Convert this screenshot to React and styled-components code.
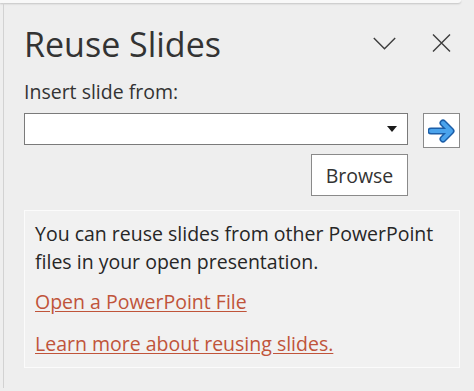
import React from "react";
import styled, { createGlobalStyle } from "styled-components";

const GlobalStyle = createGlobalStyle`
  html, body {
    margin: 0;
    padding: 0;
    background: #eeeeee;
  }
  body {
    font-family: "Open Sans", "Noto Sans", sans-serif;
    color: #262626;
  }
`;

function ReuseSlides() {
  return (
    <>
      <GlobalStyle />
      <Page>
        <TopStrip />
        <Panel>
          <Header>
            <Title>Reuse Slides</Title>
            <HeaderIcons>
              <IconButton aria-label="Collapse">
                <svg width="23" height="13" viewBox="0 0 23 13">
                  <path d="M0.8 1 L11.5 11.8 L22.2 1" fill="none" stroke="#3c3c3c" strokeWidth="1.4" />
                </svg>
              </IconButton>
              <IconButton aria-label="Close">
                <svg width="19" height="18" viewBox="0 0 19 18">
                  <path d="M1 0.5 L18 17.5 M18 0.5 L1 17.5" fill="none" stroke="#3c3c3c" strokeWidth="1.4" />
                </svg>
              </IconButton>
            </HeaderIcons>
          </Header>

          <Label>Insert slide from:</Label>
          <InputRow>
            <Select>
              <Caret />
            </Select>
            <GoButton aria-label="Go">
              {/* thick blue arrow with a dark outline */}
              <svg width="27" height="26" viewBox="0 0 27 26">
                <g fill="none" strokeLinecap="round" strokeLinejoin="round">
                  <path d="M3 13 H22 M15 5 L23 13 L15 21" stroke="#1c5ea8" strokeWidth="7" />
                  <path d="M3 13 H22 M15 5 L23 13 L15 21" stroke="#4aa3ec" strokeWidth="4" />
                </g>
              </svg>
            </GoButton>
          </InputRow>
          <BrowseRow>
            <BrowseButton>Browse</BrowseButton>
          </BrowseRow>

          <InfoBox>
            <InfoText>
              You can reuse slides from other PowerPoint files in your open
              presentation.
            </InfoText>
            <Link href="#">Open a PowerPoint File</Link>
            <Link href="#">Learn more about reusing slides.</Link>
          </InfoBox>
        </Panel>
      </Page>
    </>
  );
}

export default function App() {
  return <ReuseSlides />;
}

const Page = styled.div`
  width: 474px;
  height: 391px;
  overflow: hidden;
  background: #eeeeee;
`;

const TopStrip = styled.div`
  height: 3px;
  width: 461px;
  background: #f8f8f8;
  border-bottom-right-radius: 3px;
  box-shadow: 0 1px 2px rgba(0, 0, 0, 0.18);
`;

const Panel = styled.div`
  display: flex;
  flex-direction: column;
  margin-left: 3px;
  padding: 0 14px 0 20px;
  border-left: 1px solid #d2d2d2;
  height: 385px;
  box-sizing: border-box;
`;

const Header = styled.div`
  display: flex;
  align-items: flex-start;
  justify-content: space-between;
  padding-top: 21px;
`;

const Title = styled.h1`
  margin: 0;
  font-size: 34px;
  line-height: 40px;
  font-weight: 400;
  color: #333;
`;

const HeaderIcons = styled.div`
  display: flex;
  align-items: center;
  gap: 36px;
  margin-top: 10px;
  padding-right: 9px;
`;

const IconButton = styled.button`
  border: 0;
  background: none;
  padding: 0;
  display: flex;
`;

const Label = styled.div`
  margin-top: 16px;
  font-size: 19.5px;
  line-height: 24px;
  color: #333;
`;

const InputRow = styled.div`
  display: flex;
  align-items: flex-start;
  gap: 15px;
  margin-top: 9px;
`;

const Select = styled.div`
  position: relative;
  flex: 1;
  height: 32px;
  box-sizing: border-box;
  background: #fff;
  border: 1px solid #7a7a7a;
`;

const Caret = styled.span`
  position: absolute;
  right: 10px;
  top: 12px;
  width: 0;
  height: 0;
  border-left: 5px solid transparent;
  border-right: 5px solid transparent;
  border-top: 6px solid #1a1a1a;
`;

const GoButton = styled.button`
  width: 37px;
  height: 35px;
  box-sizing: border-box;
  background: #fff;
  border: 1px solid #8a8a8a;
  display: flex;
  align-items: center;
  justify-content: center;
  padding: 0;
`;

const BrowseRow = styled.div`
  display: flex;
  justify-content: flex-end;
  padding-right: 52px;
  margin-top: 6px;
`;

const BrowseButton = styled.button`
  width: 97px;
  height: 42px;
  box-sizing: border-box;
  background: #fff;
  border: 1px solid #8a8a8a;
  font-family: "Open Sans", "Noto Sans", sans-serif;
  font-size: 19.5px;
  color: #333;
  padding: 0;
`;

const InfoBox = styled.div`
  margin-top: 14px;
  height: 158px;
  box-sizing: border-box;
  background: #f1f1f1;
  border: 1px solid #fbfbfb;
  padding: 9px 10px 0 10px;
`;

const InfoText = styled.p`
  margin: 0 0 5px;
  font-size: 19.5px;
  line-height: 28px;
  color: #262626;
`;

const Link = styled.a`
  display: block;
  font-size: 19.5px;
  line-height: 42px;
  color: #c0543a;
  text-decoration: underline;
  text-underline-offset: 2px;
`;
